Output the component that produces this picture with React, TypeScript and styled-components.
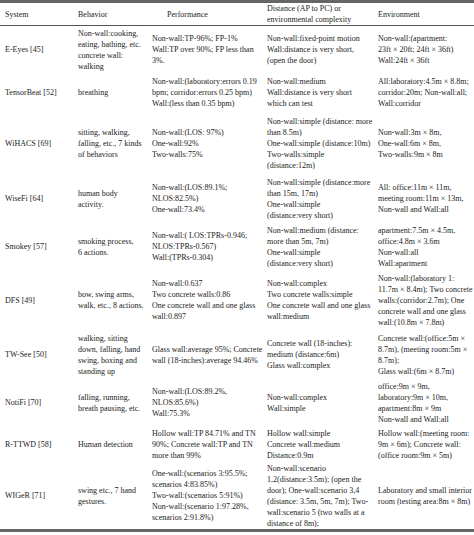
import styled, { createGlobalStyle } from "styled-components";

type iRow = {
  sys: string;
  height: number;
  beh: string[];
  perf: string[];
  dist: string[];
  env: string[];
};

const rows: iRow[] = [
  {
    sys: "E-Eyes [45]",
    height: 47.5,
    beh: ["Non-wall:cooking,", "eating, bathing, etc.", "concrete wall:", "walking"],
    perf: ["Non-wall:TP-96%; FP-1%", "Wall:TP over 90%; FP less than", "3%."],
    dist: ["Non-wall:fixed-point motion", "Wall:distance is very short,", "(open the door)"],
    env: ["Non-wall:(apartment:", "23ft × 20ft; 24ft × 36ft)", "Wall:24ft × 36ft"]
  },
  {
    sys: "TensorBeat [52]",
    height: 39.5,
    beh: ["breathing"],
    perf: ["Non-wall:(laboratory:errors 0.19", "bpm; corridor:errors 0.25 bpm)", "Wall:(less than 0.35 bpm)"],
    dist: ["Non-wall:medium", "Wall:distance is very short", "which can test"],
    env: ["All:laboratory:4.5m × 8.8m;", "corridor:20m; Non-wall:all;", "Wall:corridor"]
  },
  {
    sys: "WiHACS [69]",
    height: 61.5,
    beh: ["sitting, walking,", "falling, etc., 7 kinds", "of behaviors"],
    perf: ["Non-wall:(LOS: 97%)", "One-wall:92%", "Two-walls:75%"],
    dist: ["Non-wall:simple (distance: more", "than 8.5m)", "One-wall:simple (distance:10m)", "Two-walls:simple", "(distance:12m)"],
    env: ["Non-wall:3m × 8m,", "One-wall:6m × 8m,", "Two-walls:9m × 8m"]
  },
  {
    sys: "WiseFi [64]",
    height: 49,
    beh: ["human body", "activity."],
    perf: ["Non-wall:(LOS:89.1%;", "NLOS:82.5%)", "One-wall:73.4%"],
    dist: ["Non-wall:simple (distance:more", "than 15m, 17m)", "One-wall:simple", "(distance:very short)"],
    env: ["All: office:11m × 11m,", "meeting room:11m × 13m,", "Non-wall and Wall:all"]
  },
  {
    sys: "Smokey [57]",
    height: 47.5,
    beh: ["smoking process,", "6 actions."],
    perf: ["Non-wall:( LOS:TPRs-0.946;", "NLOS:TPRs-0.567)", "Wall:(TPRs-0.304)"],
    dist: ["Non-wall:medium (distance:", "more than 5m, 7m)", "One-wall:simple", "(distance:very short)"],
    env: ["apartment:7.5m × 4.5m,", "office:4.8m × 3.6m", "Non-wall:all", "Wall:apartment"]
  },
  {
    sys: "DFS [49]",
    height: 59.5,
    beh: ["bow, swing arms,", "walk, etc., 8 actions."],
    perf: ["Non-wall:0.637", "Two concrete walls:0.86", "One concrete wall and one glass", "wall:0.897"],
    dist: ["Non-wall:complex", "Two concrete walls:simple", "One concrete wall and one glass", "wall:medium"],
    env: ["Non-wall:(laboratory 1:", "11.7m × 8.4m); Two concrete", "walls:(corridor:2.7m); One", "concrete wall and one glass", "wall:(10.8m × 7.8m)"]
  },
  {
    sys: "TW-See [50]",
    height: 49.5,
    beh: ["walking, sitting", "down, falling, hand", "swing, boxing and", "standing up"],
    perf: ["Glass wall:average 95%; Concrete", "wall (18-inches):average 94.46%"],
    dist: ["Concrete wall (18-inches):", "medium (distance:6m)", "Glass wall:complex"],
    env: ["Concrete wall:(office:5m ×", "8.7m), (meeting room:5m ×", "8.7m);", "Glass wall:(6m × 8.7m)"]
  },
  {
    sys: "NotiFi [70]",
    height: 46,
    beh: ["falling, running,", "breath pausing, etc."],
    perf: ["Non-wall:(LOS:89.2%,", "NLOS:85.6%)", "Wall:75.3%"],
    dist: ["Non-wall:complex", "Wall:simple"],
    env: ["office:9m × 9m,", "laboratory:9m × 10m,", "apartment:8m × 9m", "Non-wall and Wall:all"]
  },
  {
    sys: "R-TTWD [58]",
    height: 37,
    beh: ["Human detection"],
    perf: ["Hollow wall:TP 84.71% and TN", "90%; Concrete wall:TP and TN", "more than 99%"],
    dist: ["Hollow wall:simple", "Concrete wall:medium", "Distance:0.9m"],
    env: ["Hollow wall:(meeting room:", "9m × 6m); Concrete wall:", "(office room:9m × 5m)"]
  },
  {
    sys: "WIGeR [71]",
    height: 68,
    beh: ["swing etc., 7 hand", "gestures."],
    perf: ["One-wall:(scenarios 3:95.5%;", "scenarios 4:83.85%)", "Two-wall:(scenarios 5:91%)", "Non-wall:(scenario 1:97.28%,", "scenarios 2:91.8%)"],
    dist: ["Non-wall:scenario", "1,2(distance:3.5m); (open the", "door); One-wall:scenario 3,4", "(distance: 3.5m, 5m, 7m); Two-", "wall:scenario 5 (two walls at a", "distance of 8m);"],
    env: ["Laboratory and small interior", "room (testing area:8m × 8m)"]
  }
];

const GlobalStyle = createGlobalStyle`
  html, body {
    margin: 0;
    padding: 0;
    background: #ffffff;
  }
`;

const Table = styled.table`
  width: 474px;
  table-layout: fixed;
  border-collapse: collapse;
  font-family: "Liberation Serif", "Times New Roman", serif;
  font-size: 8px;
  line-height: 11px;
  color: #222222;
  border-top: 3px solid #666666;
  border-bottom: 3px solid #666666;
`;

const HeadRow = styled.tr`
  height: 22px;
  border-bottom: 1px solid #555555;
`;

const BodyRow = styled.tr<{ $h: number }>`
  height: ${p => p.$h}px;
`;

const Cell = styled.td<{ $indent?: number }>`
  padding: 0 0 0 ${p => p.$indent ?? 4}px;
  vertical-align: middle;
  text-align: left;
  white-space: nowrap;
  overflow: hidden;
`;

const HeadCell = styled(Cell).attrs({ as: "th" })`
  font-weight: normal;
`;

const Lines = ({ lines }: { lines: string[] }) => (
  <>
    {lines.map((line, i) => (
      <div key={i}>{line}</div>
    ))}
  </>
);

export default function App() {
  return (
    <>
      <GlobalStyle />
      <Table>
        <colgroup>
          <col style={{ width: 74 }} />
          <col style={{ width: 74 }} />
          <col style={{ width: 115 }} />
          <col style={{ width: 111 }} />
          <col style={{ width: 100 }} />
        </colgroup>
        <thead>
          <HeadRow>
            <HeadCell $indent={5}>System</HeadCell>
            <HeadCell>Behavior</HeadCell>
            <HeadCell $indent={19}>Performance</HeadCell>
            <HeadCell>
              <Lines lines={["Distance (AP to PC) or", "environmental complexity"]} />
            </HeadCell>
            <HeadCell>Environment</HeadCell>
          </HeadRow>
        </thead>
        <tbody>
          {rows.map(row => (
            <BodyRow key={row.sys} $h={row.height}>
              <Cell $indent={5}>{row.sys}</Cell>
              <Cell>
                <Lines lines={row.beh} />
              </Cell>
              <Cell>
                <Lines lines={row.perf} />
              </Cell>
              <Cell>
                <Lines lines={row.dist} />
              </Cell>
              <Cell>
                <Lines lines={row.env} />
              </Cell>
            </BodyRow>
          ))}
        </tbody>
      </Table>
    </>
  );
}
